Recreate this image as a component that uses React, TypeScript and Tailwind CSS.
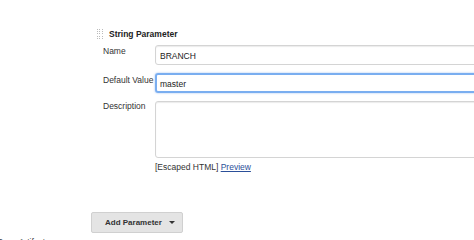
export default function App() {
  return (
    <div
      className="relative h-[240px] w-[474px] overflow-hidden bg-white text-[8.5px] leading-[10px] text-[#333]"
      style={{ fontFamily: '"Liberation Sans", Arial, sans-serif' }}
    >
      <div className="pl-[97px] pt-[29px]">
        <div className="flex h-[10px] items-center gap-[6px]">
          <div className="grid h-[10px] w-[6px] shrink-0 grid-cols-3 gap-px">
            {Array.from({ length: 15 }).map((_, i) => (
              <span key={i} className="h-px w-px bg-[#bbb]" />
            ))}
          </div>
          <span className="font-bold text-[#222]">String Parameter</span>
        </div>

        <div className="mt-[6px] flex flex-col gap-[8px] pl-[6px]">
          <div className="flex">
            <label className="w-[52px] shrink-0 pt-[1px]">Name</label>
            <div className="flex h-[20px] w-[340px] shrink-0 items-center rounded-[3px] border border-[#d4d4d4] px-[4px] pt-[1px] text-[#222] shadow-[inset_0_1px_1px_rgba(0,0,0,0.08)]">
              BRANCH
            </div>
          </div>
          <div className="flex">
            <label className="w-[52px] shrink-0 whitespace-nowrap pt-[2px]">Default Value</label>
            <div className="flex h-[20px] w-[340px] shrink-0 items-center rounded-[3px] border-2 border-[#7aaef0] px-[3px] pt-[2px] text-[#222] shadow-[0_0_2px_rgba(80,140,230,0.6)]">
              master
            </div>
          </div>
          <div className="flex">
            <label className="w-[52px] shrink-0">Description</label>
            <div className="flex flex-col">
              <div className="h-[57px] w-[340px] rounded-[3px] border border-[#d4d4d4] shadow-[inset_0_1px_1px_rgba(0,0,0,0.08)]" />
              <div className="mt-[4px]">
                [Escaped HTML] <span className="text-[#2b4f99] underline">Preview</span>
              </div>
            </div>
          </div>
        </div>
      </div>

      <div className="mt-[40px] pl-[91px]">
        <button className="flex h-[21px] w-[92px] items-center justify-between rounded-[2px] border border-[#d0d0d0] bg-[#e4e4e4] pl-[13px] pr-[7px] text-[8px] font-bold text-[#333]">
          <span className="whitespace-nowrap">Add Parameter</span>
          <span className="h-0 w-0 border-x-[3px] border-t-[3px] border-x-transparent border-t-[#333]" />
        </button>
      </div>

      <div className="ml-[-3px] mt-[4px] whitespace-nowrap text-[#333]">Copy Artifact</div>
    </div>
  );
}
